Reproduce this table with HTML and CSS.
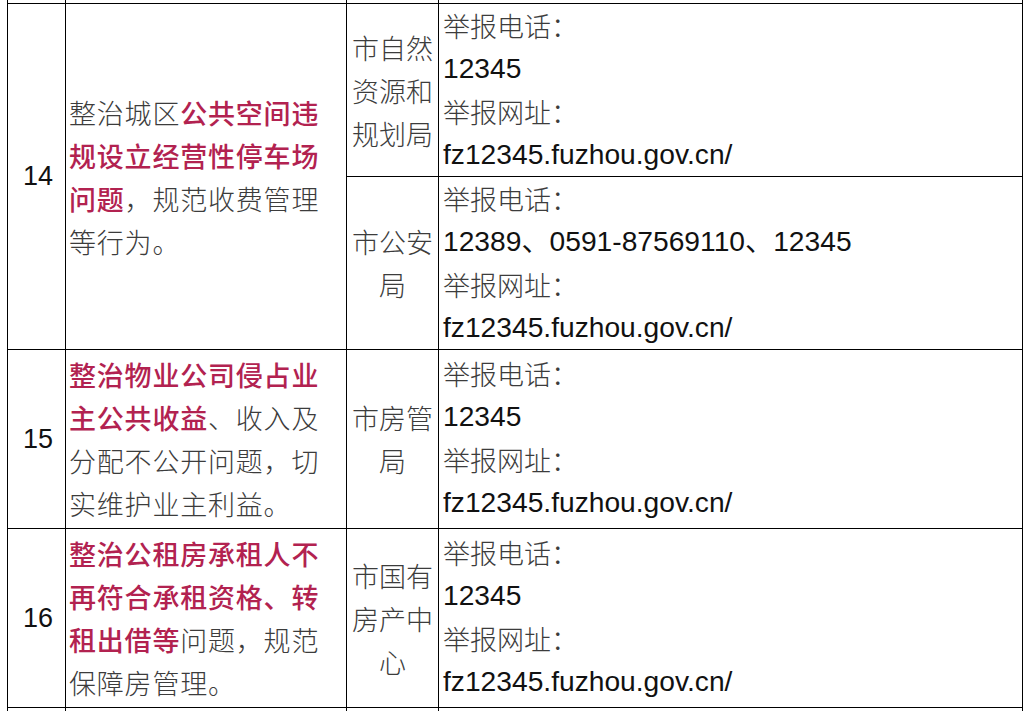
FILE: index.html
```html
<!DOCTYPE html>
<html lang="zh-CN">
<head>
<meta charset="utf-8">
<title>整治事项举报表</title>
<link rel="stylesheet" href="styles.css">
</head>
<body>
<div class="page">
<table class="grid">
  <colgroup>
    <col class="c-no"><col class="c-desc"><col class="c-dept"><col class="c-contact">
  </colgroup>
  <tr class="stub stub-top"><td></td><td></td><td></td><td></td></tr>
  <tr class="row-sub">
    <td class="no" rowspan="2">14</td>
    <td class="desc" rowspan="2">整治城区<span class="hl">公共空间违规设立经营性停车场问题</span>，规范收费管理等行为。</td>
    <td class="dept">市自然资源和规划局</td>
    <td class="contact"><div class="cj">举报电话：</div><div>12345</div><div class="cj">举报网址：</div><div>fz12345.fuzhou.gov.cn/</div></td>
  </tr>
  <tr class="row-sub">
    <td class="dept">市公安局</td>
    <td class="contact"><div class="cj">举报电话：</div><div>12389、0591-87569110、12345</div><div class="cj">举报网址：</div><div>fz12345.fuzhou.gov.cn/</div></td>
  </tr>
  <tr class="row-full">
    <td class="no">15</td>
    <td class="desc"><span class="hl">整治物业公司侵占业主公共收益</span>、收入及分配不公开问题，切实维护业主利益。</td>
    <td class="dept">市房管局</td>
    <td class="contact"><div class="cj">举报电话：</div><div>12345</div><div class="cj">举报网址：</div><div>fz12345.fuzhou.gov.cn/</div></td>
  </tr>
  <tr class="row-full">
    <td class="no">16</td>
    <td class="desc"><span class="hl">整治公租房承租人不再符合承租资格、转租出借等</span>问题，规范保障房管理。</td>
    <td class="dept">市国有房产中心</td>
    <td class="contact"><div class="cj">举报电话：</div><div>12345</div><div class="cj">举报网址：</div><div>fz12345.fuzhou.gov.cn/</div></td>
  </tr>
  <tr class="stub stub-bottom"><td></td><td></td><td></td><td></td></tr>
</table>
</div>
</body>
</html>
```

FILE: styles.css
```css
html, body {
  margin: 0;
  padding: 0;
  background: #ffffff;
}
.page {
  padding-left: 7px;
  overflow: hidden;
  height: 711px;
}
.grid {
  border-collapse: collapse;
  table-layout: fixed;
  width: 1015px;
  font-family: "Liberation Sans", "Noto Sans CJK SC", sans-serif;
  font-size: 28.2px;
  line-height: 43px;
  color: #111111;
}
.c-no { width: 58px; }
.c-desc { width: 281px; }
.c-dept { width: 92px; }
.c-contact { width: 584px; }
.grid td {
  border: 1px solid #000000;
  padding: 0;
}
.stub-top td {
  border-top: none;
  height: 3px;
}
.stub-bottom td {
  border-bottom: none;
  height: 20px;
}
.row-sub td { height: 172px; }
.row-full td { height: 176px; }
.no {
  text-align: center;
  vertical-align: middle;
  font-size: 27px;
  padding-left: 3px !important;
  color: #111111;
}
.desc {
  vertical-align: middle;
  padding: 0 24px 0 3px !important;
  letter-spacing: 0.8px;
  font-size: 27px;
  color: #3c3c3c;
  font-family: "Noto Sans CJK SC", sans-serif;
  font-weight: 300;
}
.hl {
  color: #b22250;
  font-weight: 500;
}
.dept {
  text-align: center;
  vertical-align: middle;
  font-size: 27px;
  color: #3c3c3c;
  font-family: "Noto Sans CJK SC", sans-serif;
  font-weight: 300;
  padding: 0 4px !important;
}
.contact {
  vertical-align: top;
  padding: 0 0 0 4px !important;
  color: #111111;
}
.row-full .contact { padding-top: 2px !important; }
.cj {
  font-size: 27px;
  color: #3c3c3c;
  font-family: "Noto Sans CJK SC", sans-serif;
  font-weight: 300;
}
```
